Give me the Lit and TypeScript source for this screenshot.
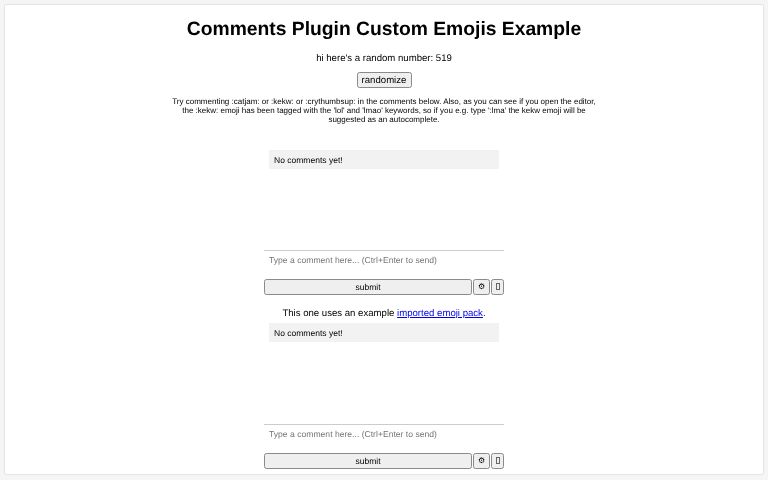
import { LitElement, html, css } from "lit";
import { customElement } from "lit/decorators.js";

@customElement("comment-box")
class CommentBox extends LitElement {
  static styles = css`
    :host { display: block; width: 240px; margin: 0 auto; font-family: "Liberation Sans", Arial, sans-serif; text-align: left; text-rendering: geometricPrecision; }
    .list { height: var(--list-h, 100px); padding: 0 5px; box-sizing: border-box; }
    .empty { background: #f2f2f2; height: 19px; line-height: 20px; padding: 0 5px; font-size: 8.53px; color: #000; }
    .field { border-top: 1px solid #ccc; height: 29px; padding: 4px 5px 0; font-size: 8.6px; line-height: 11px; color: #757575; box-sizing: border-box; }
    .row { display: flex; gap: 1px; height: 16px; }
    button { box-sizing: border-box; height: 16px; padding: 0; margin: 0; font: 8.53px "Liberation Sans", Arial, sans-serif; text-rendering: geometricPrecision; background: #efefef; border: 1px solid #8a8a8a; border-radius: 2.5px; color: #000; }
    .submit { flex: 1; }
    .small { width: 17px; font-family: "DejaVu Sans", sans-serif; font-size: 8px; }
    .tiny { width: 13px; display: flex; align-items: center; justify-content: center; }
    .tofu { display: block; width: 4px; height: 7px; border: 1px solid #666; box-sizing: border-box; }
  `;
  render() {
    return html`
      <div class="list"><div class="empty">No comments yet!</div></div>
      <div class="field">Type a comment here... (Ctrl+Enter to send)</div>
      <div class="row">
        <button class="submit">submit</button>
        <button class="small">⚙</button>
        <button class="tiny"><span class="tofu"></span></button>
      </div>
    `;
  }
}

@customElement("app-root")
class AppRoot extends LitElement {
  static styles = css`
    :host { display: block; height: 480px; overflow: hidden; background: #f5f5f5; font-family: "Liberation Sans", Arial, sans-serif; color: #000; text-rendering: geometricPrecision; }
    .card { box-sizing: border-box; margin: 4px; height: 471px; overflow: hidden; background: #fff; border: 1px solid #e4e4e4; border-radius: 2px; text-align: center; padding-top: 14px; filter: blur(0.3px); }
    h1 { margin: 0; font-size: 19.3px; line-height: 22px; font-weight: bold; }
    .num { margin: 12px 0 0; font-size: 9.6px; line-height: 12px; }
    .rand { display: block; margin: 7px auto 0; box-sizing: border-box; height: 16px; width: 55px; padding: 0; font: 9.6px "Liberation Sans", Arial, sans-serif; text-rendering: geometricPrecision; background: #efefef; border: 1px solid #8a8a8a; border-radius: 2.5px; color: #000; }
    .desc { margin: 9px auto 0; width: 428px; font-size: 8px; line-height: 9.2px; }
    .first { margin-top: 25px; }
    .second { --list-h: 101px; }
    .sep { margin: 13px 0 3px; font-size: 9.6px; line-height: 12px; }
    a { color: #0000ee; }
  `;
  render() {
    return html`
      <div class="card">
        <h1>Comments Plugin Custom Emojis Example</h1>
        <p class="num">hi here's a random number: 519</p>
        <button class="rand">randomize</button>
        <p class="desc">Try commenting :catjam: or :kekw: or :crythumbsup: in the comments below. Also, as you can see if you open the editor, the :kekw: emoji has been tagged with the 'lol' and 'lmao' keywords, so if you e.g. type ':lma' the kekw emoji will be suggested as an autocomplete.</p>
        <comment-box class="first"></comment-box>
        <p class="sep">This one uses an example <a href="#">imported emoji pack</a>.</p>
        <comment-box class="second"></comment-box>
      </div>
    `;
  }
}
